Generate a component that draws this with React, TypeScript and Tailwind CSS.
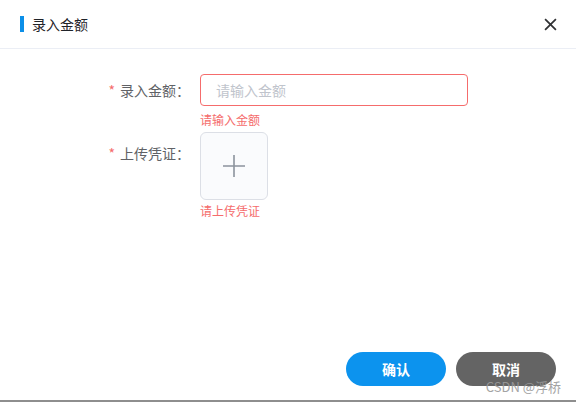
import React from 'react';

const font = { fontFamily: '"Noto Sans CJK SC", "Noto Sans", sans-serif' };

function FormLabel({ text, className = '' }: { text: string; className?: string }) {
  return (
    <div className={`w-[200px] shrink-0 pr-[10px] text-right text-[14px] leading-[32px] text-[#606266] ${className}`}>
      <span className="mr-[5px] text-[#f56c6c]">*</span>
      {text}：
    </div>
  );
}

export default function App() {
  return (
    <div className="relative flex h-[402px] w-[576px] flex-col bg-white" style={font}>
      {/* Header */}
      <div className="flex h-[49px] shrink-0 items-center justify-between border-b border-[#ebeef5] pl-5 pr-[18px]">
        <div className="flex items-center">
          <span className="h-4 w-1 bg-[#0c8fe8]" />
          <span className="ml-[8px] text-[14px] text-[#1f2329]">录入金额</span>
        </div>
        <button className="flex h-4 w-4 items-center justify-center">
          <svg width="13" height="13" viewBox="0 0 12 12" fill="none" stroke="#303133" strokeWidth="1.6">
            <path d="M1 1L11 11M11 1L1 11" />
          </svg>
        </button>
      </div>

      {/* Body */}
      <div className="flex-1 pt-[25px]">
        <div className="flex">
          <FormLabel text="录入金额" />
          <div className="flex flex-col">
            <div className="flex h-8 w-[268px] items-center rounded-[4px] border border-[#f56c6c] px-[15px] text-[14px] text-[#c0c4cc]">
              请输入金额
            </div>
            <div className="h-[26px] pt-[4px] text-[12px] leading-[20px] text-[#f56c6c]">请输入金额</div>
          </div>
        </div>
        <div className="flex">
          <FormLabel text="上传凭证" className="pt-[5px]" />
          <div className="flex flex-col">
            <div className="flex h-[68px] w-[68px] items-center justify-center rounded-[6px] border border-[#dcdfe6] bg-[#fafbfd]">
              <svg width="24" height="24" viewBox="0 0 24 24" fill="none" stroke="#8c939d" strokeWidth="1.6">
                <path d="M12 1V23M1 12H23" />
              </svg>
            </div>
            <div className="pt-[1px] text-[12px] leading-[20px] text-[#f56c6c]">请上传凭证</div>
          </div>
        </div>
      </div>

      {/* Footer */}
      <div className="flex justify-end gap-[10px] pb-[14px] pr-5">
        <button className="h-[34px] w-[100px] rounded-full bg-[#0c93ee] text-[14px] font-bold text-white">确认</button>
        <button className="h-[34px] w-[100px] rounded-full bg-[#646464] text-[14px] font-bold text-white">取消</button>
      </div>
      <div className="h-[2px] shrink-0 bg-[#8e8e8e]" />

      <span className="absolute bottom-[9px] right-[15px] text-[13px] leading-none text-[#9a9a9a] opacity-90">CSDN @浮桥</span>
    </div>
  );
}
